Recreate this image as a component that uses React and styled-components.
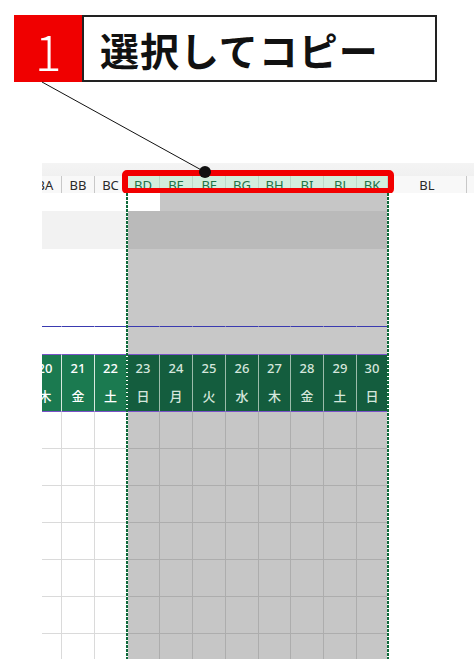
import React from "react";
import styled, { createGlobalStyle } from "styled-components";

const GlobalStyle = createGlobalStyle`
  html, body { margin: 0; padding: 0; background: #fff; }
  body { overflow: hidden; }
`;

// column widths of the visible part of the sheet, BA .. BL + one more
const COLS = [
  { name: "BA", w: 33, day: "20", wd: "木" },
  { name: "BB", w: 33, day: "21", wd: "金" },
  { name: "BC", w: 32, day: "22", wd: "土" },
  { name: "BD", w: 33, day: "23", wd: "日", sel: true },
  { name: "BE", w: 33, day: "24", wd: "月", sel: true },
  { name: "BF", w: 33, day: "25", wd: "火", sel: true },
  { name: "BG", w: 33, day: "26", wd: "水", sel: true },
  { name: "BH", w: 32, day: "27", wd: "木", sel: true },
  { name: "BI", w: 33, day: "28", wd: "金", sel: true },
  { name: "BJ", w: 33, day: "29", wd: "土", sel: true },
  { name: "BK", w: 31, day: "30", wd: "日", sel: true },
  { name: "BL", w: 79 },
  { name: "", w: 40 },
];
const template = COLS.map((c) => `${c.w}px`).join(" ");

const Page = styled.div`
  position: relative;
  width: 474px;
  height: 659px;
  overflow: hidden;
  font-family: "Noto Sans", "Noto Sans CJK JP", sans-serif;
`;

const Title = styled.div`
  display: flex;
  margin: 15px 0 0 14px;
  height: 67px;
`;

const StepNo = styled.div`
  width: 68px;
  display: flex;
  align-items: center;
  justify-content: center;
  background: #f00000;
  color: #fff;
  font-size: 50px;
  font-weight: 300;
  font-family: "Noto Sans CJK JP", "Noto Sans", sans-serif;
`;

const TitleText = styled.div`
  width: 355px;
  box-sizing: border-box;
  border: 2px solid #222;
  display: flex;
  align-items: center;
  padding-left: 16px;
  font-family: "Noto Sans CJK JP", sans-serif;
  font-weight: 700;
  font-size: 39px;
  color: #111;
  letter-spacing: 1px;
`;

const SheetClip = styled.div`
  margin: 81px 0 0 42px;
  overflow: hidden;
`;

const Sheet = styled.div`
  margin-left: -13px;
  width: 475px;
`;

const Header = styled.div`
  position: relative;
  background: linear-gradient(#f4f4f4, #ebebeb);
  padding-top: 13px;
`;

const Row = styled.div`
  display: grid;
  grid-template-columns: ${template};
  height: ${(p) => p.$h}px;
`;

const HeadCell = styled.div`
  box-sizing: border-box;
  display: flex;
  align-items: center;
  justify-content: center;
  padding-bottom: 1px;
  font-size: 13px;
  background: ${(p) => (p.$sel ? "#d3eedd" : "#f8f8f8")};
  color: ${(p) => (p.$sel ? "#217346" : "#2a2a2a")};
  border-right: 1px solid ${(p) => (p.$sel ? "#bcd9c8" : "#c8c8c8")};
  border-bottom: 1px solid #c6c6c6;
`;

const RedFrame = styled.div`
  position: absolute;
  left: 93px;
  top: 7px;
  width: 272px;
  height: 24px;
  box-sizing: border-box;
  border: 6px solid #f20000;
  border-radius: 5px;
`;

const Body = styled.div`
  position: relative;
`;

const Cell = styled.div`
  box-sizing: border-box;
  background: ${(p) => p.$bg || "#fff"};
  border-right: 1px solid ${(p) => p.$v || "transparent"};
  border-bottom: 1px solid ${(p) => p.$b || "transparent"};
`;

const DayCell = styled.div`
  box-sizing: border-box;
  display: grid;
  grid-template-rows: 25px 1fr;
  align-items: center;
  justify-items: center;
  background: ${(p) => (p.$sel ? "#145d3e" : "#1b7a50")};
  color: ${(p) => (p.$sel ? "#d5e6dc" : "#fff")};
  border-right: 1px solid ${(p) => (p.$sel ? "#9cbcab" : "#d8e9df")};
  border-top: 1px solid #7a52c8;
  border-bottom: 1px solid #7a52c8;
  font-size: 13px;
  font-weight: 500;
  font-family: "Noto Sans", "Noto Sans CJK JP", sans-serif;
`;

const BlankDay = styled.div`
  background: #fff;
`;

const Marching = styled.div`
  position: absolute;
  top: 0;
  bottom: 0;
  left: ${(p) => p.$x}px;
  width: 2px;
  background: repeating-linear-gradient(
    to bottom,
    #0f6a3b 0 3px,
    #ffffff 3px 4px
  );
`;

const Callout = styled.svg`
  position: absolute;
  left: 0;
  top: 0;
  pointer-events: none;
`;

const bandRow = ({ firstWhite, leftBg, selBg, line }) =>
  COLS.map((c, i) => {
    let bg = "#fff";
    if (c.sel) bg = firstWhite && i === 3 ? "#fff" : selBg;
    else if (i < 3 && leftBg) bg = leftBg;
    const b = line && i <= 10 ? line : undefined;
    return <Cell key={i} $bg={bg} $b={b} />;
  });

const gridRow = () =>
  COLS.map((c, i) => {
    if (c.sel) return <Cell key={i} $bg="#c6c6c6" $v="#adadad" $b="#adadad" />;
    if (i < 3) return <Cell key={i} $v="#dadada" $b="#dadada" />;
    return <Cell key={i} />;
  });

export default function App() {
  return (
    <Page>
      <GlobalStyle />
      <Title>
        <StepNo>1</StepNo>
        <TitleText>選択してコピー</TitleText>
      </Title>

      <SheetClip>
        <Sheet>
          <Header>
            <Row $h={17}>
              {COLS.map((c, i) => (
                <HeadCell key={i} $sel={c.sel}>
                  {c.name}
                </HeadCell>
              ))}
            </Row>
            <RedFrame />
          </Header>

          <Body>
            <Row $h={18}>{bandRow({ firstWhite: true, selBg: "#c6c6c6" })}</Row>
            <Row $h={38}>{bandRow({ leftBg: "#f2f2f2", selBg: "#bababa" })}</Row>
            <Row $h={78}>{bandRow({ selBg: "#c8c8c8", line: "#3a3ab0" })}</Row>
            <Row $h={27}>{bandRow({ selBg: "#c8c8c8" })}</Row>
            <Row $h={58}>
              {COLS.map((c, i) =>
                c.day ? (
                  <DayCell key={i} $sel={c.sel}>
                    <span>{c.day}</span>
                    <span>{c.wd}</span>
                  </DayCell>
                ) : (
                  <BlankDay key={i} />
                )
              )}
            </Row>
            {Array.from({ length: 7 }).map((_, r) => (
              <Row key={r} $h={37}>
                {gridRow()}
              </Row>
            ))}
            <Marching $x={97} />
            <Marching $x={358} />
          </Body>
        </Sheet>
      </SheetClip>

      <Callout width="474" height="659">
        <line x1="42" y1="82" x2="205" y2="172" stroke="#111" strokeWidth="1" />
        <circle cx="205" cy="172" r="6" fill="#111" />
      </Callout>
    </Page>
  );
}
